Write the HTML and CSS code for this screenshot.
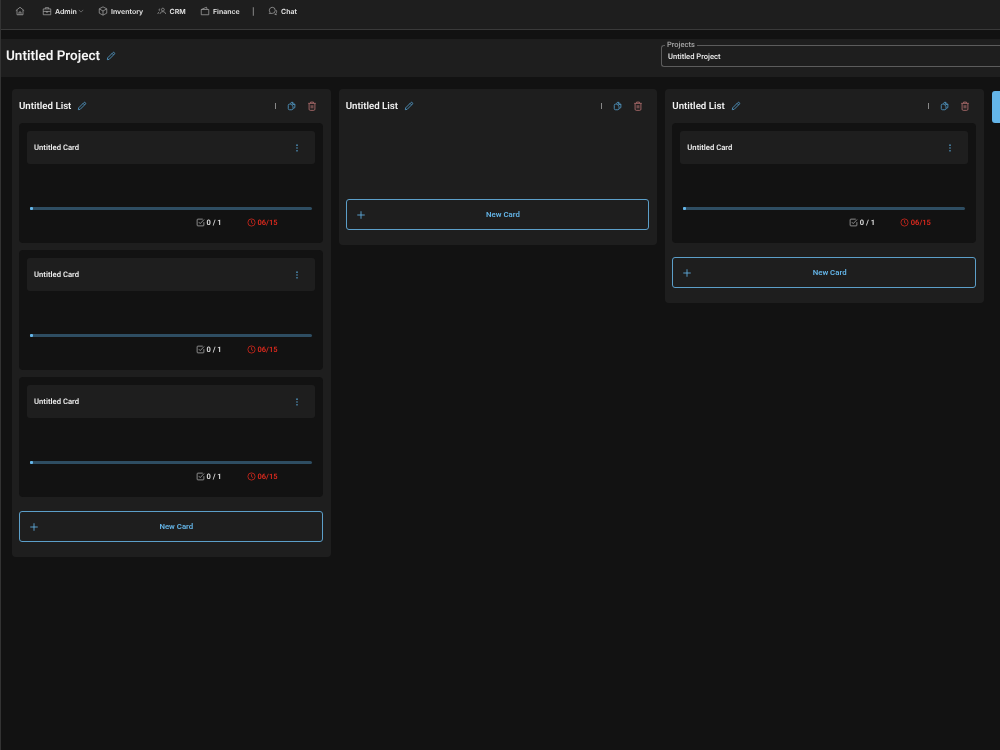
FILE: index.html
```html
<!DOCTYPE html>
<html lang="en">
<head>
<meta charset="utf-8">
<title>Untitled Project</title>
<link rel="stylesheet" href="styles.css">
</head>
<body>
<svg class="defs" width="0" height="0" aria-hidden="true">
  <defs>
    <symbol id="pencil" viewBox="0 0 12 12"><path d="M2 8.200 8.200 2a1.200 1.200 0 0 1 1.800 1.800L3.800 10 1.600 10.400Z M7.300 2.900l1.800 1.800" fill="none" stroke="currentColor" stroke-width="1.100"/></symbol>
    <symbol id="copy" viewBox="0 0 12 12"><path d="M5 3.500V2.600A1.600 1.600 0 0 1 6.600 1h.9L10.500 4v3.400A1.600 1.600 0 0 1 8.900 9H8.200 M7.500 1v3h3" fill="none" stroke="currentColor" stroke-width="1.200"/><path d="M3.300 3.500H5.200L8 6.300v3.100A1.600 1.600 0 0 1 6.400 11H3.300A1.600 1.600 0 0 1 1.700 9.400V5.100A1.600 1.600 0 0 1 3.300 3.500Z" fill="none" stroke="currentColor" stroke-width="1.200"/></symbol>
    <symbol id="trash" viewBox="0 0 12 12"><path d="M1.500 2.800h9 M4.300 2.600V1.300h3.400v1.300 M2.500 2.800v7a1.400 1.400 0 0 0 1.400 1.400h4.200a1.400 1.400 0 0 0 1.400-1.400v-7 M5 5v3.800 M7 5v3.800" fill="none" stroke="currentColor" stroke-width="1.100"/></symbol>
    <symbol id="check" viewBox="0 0 12 12"><path d="M10.500 5.500v4a1 1 0 0 1-1 1h-7a1 1 0 0 1-1-1v-7a1 1 0 0 1 1-1h6.500 M3.800 5.500 5.600 7.500 10.800 2" fill="none" stroke="currentColor" stroke-width="1"/></symbol>
    <symbol id="clock" viewBox="0 0 12 12"><circle cx="6" cy="6" r="4.800" fill="none" stroke="currentColor" stroke-width="1"/><path d="M6 3v3.200L8 7.400" fill="none" stroke="currentColor" stroke-width="1"/></symbol>
    <symbol id="plus" viewBox="0 0 12 12"><path d="M6 1.500v9 M1.500 6h9" fill="none" stroke="currentColor" stroke-width="1"/></symbol>
    <symbol id="dots" viewBox="0 0 12 12"><circle cx="6" cy="2.600" r="1" fill="currentColor"/><circle cx="6" cy="6" r="1" fill="currentColor"/><circle cx="6" cy="9.400" r="1" fill="currentColor"/></symbol>
  </defs>
</svg>
<div class="app">
  <nav class="nav">
    <span class="nav-item home"><svg class="nav-icon" viewBox="0 0 12 12"><path d="M1 5.600 6 1.500l5 4.100 M2.400 4.800v5.700h7.200V4.800 M4.800 10.500V7.200h2.400v3.300" fill="none" stroke="currentColor" stroke-width=".9"/></svg></span>
    <span class="nav-item admin"><svg class="nav-icon" viewBox="0 0 12 12"><path d="M1.500 3.500h9v7h-9Z M4 3.500V2h4v1.500 M1.500 6.500h9 M5 6v1.400h2V6" fill="none" stroke="currentColor" stroke-width=".9"/></svg>Admin<svg class="chev" viewBox="0 0 8 8"><path d="M1 2.500 4 5.500l3-3" fill="none" stroke="currentColor" stroke-width=".8"/></svg></span>
    <span class="nav-item inventory"><svg class="nav-icon" viewBox="0 0 12 12"><path d="M6 1 10.500 3.400v5.200L6 11 1.500 8.600V3.400Z M1.500 3.400 6 6l4.500-2.600 M6 6v5" fill="none" stroke="currentColor" stroke-width=".9"/></svg>Inventory</span>
    <span class="nav-item crm"><svg class="nav-icon" viewBox="0 0 12 12"><path d="M7 2.600a1.700 1.700 0 1 0 .01 0 M3.600 9.500c.3-1.700 1.500-2.700 3.400-2.700s3.100 1 3.400 2.700 M3.700 3.300a1.500 1.500 0 0 0-.4 2.800 M2.400 7.200c-.7.400-1.200 1.200-1.400 2.300" fill="none" stroke="currentColor" stroke-width=".9"/></svg>CRM</span>
    <span class="nav-item finance"><svg class="nav-icon" viewBox="0 0 12 12"><path d="M1.500 4.200h9v6.300h-9Z M1.500 4.200 7.800 1.500l.8 2.700" fill="none" stroke="currentColor" stroke-width=".9"/></svg>Finance</span>
    <span class="nav-sep">|</span>
    <span class="nav-item chat"><svg class="nav-icon" viewBox="0 0 12 12"><path d="M5 1.500a3.700 3.700 0 0 1 3.700 3.700A3.700 3.700 0 0 1 5 8.900H1.500l1-1.300A3.700 3.700 0 0 1 5 1.500Z M9.500 4.800c1 .8 1.300 3-.1 4.200l.6 1.500-2.200-.6" fill="none" stroke="currentColor" stroke-width=".9"/></svg>Chat</span>
  </nav>
  <header class="project-bar">
    <div class="project-title">
      <h1>Untitled Project</h1>
      <svg class="icon pencil-lg"><use href="#pencil"/></svg>
    </div>
    <fieldset class="project-select">
      <legend>Projects</legend>
      <span>Untitled Project</span>
    </fieldset>
  </header>
  <main class="board">
    <section class="list">
      <div class="list-head">
        <h2>Untitled List</h2>
        <svg class="icon pencil"><use href="#pencil"/></svg>
        <span class="list-sep"></span>
        <svg class="icon copy"><use href="#copy"/></svg>
        <svg class="icon trash"><use href="#trash"/></svg>
      </div>
      <article class="card">
        <div class="card-head"><h3>Untitled Card</h3><svg class="icon dots"><use href="#dots"/></svg></div>
        <div class="progress"><span class="progress-dot"></span></div>
        <div class="card-meta">
          <span class="tasks"><svg class="icon meta-icon"><use href="#check"/></svg>0 / 1</span>
          <span class="due"><svg class="icon meta-icon"><use href="#clock"/></svg>06/15</span>
        </div>
      </article>
      <article class="card">
        <div class="card-head"><h3>Untitled Card</h3><svg class="icon dots"><use href="#dots"/></svg></div>
        <div class="progress"><span class="progress-dot"></span></div>
        <div class="card-meta">
          <span class="tasks"><svg class="icon meta-icon"><use href="#check"/></svg>0 / 1</span>
          <span class="due"><svg class="icon meta-icon"><use href="#clock"/></svg>06/15</span>
        </div>
      </article>
      <article class="card">
        <div class="card-head"><h3>Untitled Card</h3><svg class="icon dots"><use href="#dots"/></svg></div>
        <div class="progress"><span class="progress-dot"></span></div>
        <div class="card-meta">
          <span class="tasks"><svg class="icon meta-icon"><use href="#check"/></svg>0 / 1</span>
          <span class="due"><svg class="icon meta-icon"><use href="#clock"/></svg>06/15</span>
        </div>
      </article>
      <button class="new-card"><svg class="icon plus"><use href="#plus"/></svg><span>New Card</span></button>
    </section>
    <section class="list">
      <div class="list-head">
        <h2>Untitled List</h2>
        <svg class="icon pencil"><use href="#pencil"/></svg>
        <span class="list-sep"></span>
        <svg class="icon copy"><use href="#copy"/></svg>
        <svg class="icon trash"><use href="#trash"/></svg>
      </div>
      <div class="empty"></div>
      <button class="new-card"><svg class="icon plus"><use href="#plus"/></svg><span>New Card</span></button>
    </section>
    <section class="list">
      <div class="list-head">
        <h2>Untitled List</h2>
        <svg class="icon pencil"><use href="#pencil"/></svg>
        <span class="list-sep"></span>
        <svg class="icon copy"><use href="#copy"/></svg>
        <svg class="icon trash"><use href="#trash"/></svg>
      </div>
      <article class="card">
        <div class="card-head"><h3>Untitled Card</h3><svg class="icon dots"><use href="#dots"/></svg></div>
        <div class="progress"><span class="progress-dot"></span></div>
        <div class="card-meta">
          <span class="tasks"><svg class="icon meta-icon"><use href="#check"/></svg>0 / 1</span>
          <span class="due"><svg class="icon meta-icon"><use href="#clock"/></svg>06/15</span>
        </div>
      </article>
      <button class="new-card"><svg class="icon plus"><use href="#plus"/></svg><span>New Card</span></button>
    </section>
    <button class="add-list" aria-label="New List"></button>
  </main>
</div>
</body>
</html>
```
FILE: styles.css
```css
* { box-sizing: border-box; margin: 0; padding: 0; }
html, body { width: 1000px; height: 750px; overflow: hidden; background: #121212; }
body { font-family: Roboto, "Liberation Sans", sans-serif; color: #e8e8e8; text-rendering: geometricPrecision; }
.defs { position: absolute; }
.app { width: 1000px; height: 750px; border-left: 1px solid #333; overflow: hidden; display: flex; flex-direction: column; will-change: transform; filter: blur(.35px); }
.icon { display: block; flex: none; }

.nav { height: 30px; background: #1e1e1e; border-bottom: 1px solid #3a3a3a; display: flex; align-items: flex-start; padding: 6px 0 0 14px; font-family: Inter, Roboto, sans-serif; font-size: 7px; font-weight: 600; color: #e6e6e6; flex: none; }
.nav-item { display: flex; align-items: center; height: 10px; }
.nav-icon { width: 10px; height: 10px; margin-right: 3px; color: #a4a4a4; flex: none; }
.home { width: 27px; }
.admin { width: 56px; }
.inventory { width: 58.500px; }
.crm { width: 43.500px; }
.finance { width: 52px; }
.chev { width: 6px; height: 6px; margin-left: 1px; color: #999; }
.nav-sep { width: 16px; height: 10px; line-height: 11px; color: #999; font-size: 7px; }

.project-bar { margin-top: 9px; height: 38px; background: #1e1e1e; display: flex; align-items: flex-start; justify-content: space-between; padding: 7px 0 0 5px; flex: none; }
.project-title { display: flex; align-items: center; gap: 6px; }
.project-title h1 { font-size: 13.500px; font-weight: 600; color: #f6f6f6; line-height: 20px; }
.pencil-lg { width: 10px; height: 10px; color: #4f93bd; }
.project-select { width: 339px; height: 26px; margin-top: -5px; border: 1px solid #5c5c5c; border-right: 0; border-radius: 3px 0 0 3px; padding: 0 6px; font-size: 7.600px; }
.project-select legend { color: #a8a8a8; padding: 0 2px; margin-left: -3px; font-size: 7.500px; font-weight: 500; line-height: 8px; }
.project-select span { display: block; font-weight: 500; color: #ececec; line-height: 9px; margin-top: 3px; }

.board { flex: 1; display: flex; align-items: flex-start; gap: 8px; padding: 12px 0 0 11px; }
.list { width: 318.670px; flex: none; background: #1e1e1e; border-radius: 4px; padding: 0 8px 15px 7px; display: flex; flex-direction: column; }
.list-head { height: 34px; display: flex; align-items: center; }
.list-head h2 { font-size: 9.700px; font-weight: 600; color: #f2f2f2; }
.pencil { width: 10px; height: 10px; margin-left: 6px; color: #4f93bd; }
.list-sep { width: 1px; height: 6px; background: #888; margin-left: auto; margin-right: 1px; }
.copy { width: 9px; height: 10px; margin-left: 10px; color: #4f93bd; }
.trash { width: 10px; height: 10px; margin: 0 6px 0 11px; color: #a96a6a; }

.card { height: 120px; background: #121212; border-radius: 4px; padding: 8px; margin-bottom: 7px; }
.card-head { height: 33px; padding: 0 14px 0 7px; background: #1e1e1e; border-radius: 3px; display: flex; align-items: center; justify-content: space-between; }
.card-head h3 { font-size: 7.700px; font-weight: 600; color: #ececec; }
.dots { width: 10px; height: 10px; color: #4f93bd; margin-right: -1px; }
.progress { height: 3px; margin: 43px 3px 0; background: #2e4d62; border-radius: 2px; }
.progress-dot { display: block; width: 3px; height: 3px; background: #64b5e8; border-radius: 1px; }
.card-meta { display: flex; margin-top: 8px; padding-left: 169px; font-size: 7.500px; font-weight: 600; }
.tasks, .due { display: flex; align-items: center; height: 9px; }
.tasks { color: #e4e4e4; width: 51px; }
.due { color: #e02a1e; }
.meta-icon { width: 9px; height: 9px; margin-right: 1.500px; }
.tasks .meta-icon { color: #b0b0b0; }

.new-card { height: 31px; background: transparent; border: 1px solid #5c9fc9; border-radius: 3px; display: flex; align-items: center; color: #64b5e8; font-family: inherit; margin-top: 7px; }
.plus { width: 10px; height: 10px; margin-left: 9px; }
.new-card span { flex: 1; text-align: center; font-size: 7.800px; font-weight: 600; padding-right: 8px; }
.empty { height: 76px; margin-bottom: -7px; }

.add-list { width: 30px; height: 32px; flex: none; margin-top: 2px; background: #64b5e8; border: 0; border-radius: 3px; }
```
